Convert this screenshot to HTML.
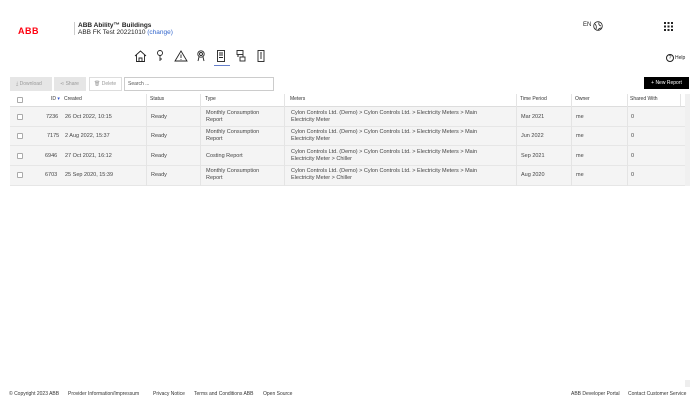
<!DOCTYPE html><html><head><style>
body{margin:0;width:700px;height:420px;background:#fff;font-family:"Liberation Sans",sans-serif;position:relative;overflow:hidden;color:#1f1f1f}
.a{position:absolute;white-space:nowrap}
.ic{position:absolute;top:49px}
.btn{position:absolute;top:77px;height:12px;font-size:5px;line-height:12px;color:#999;border:1px solid #ddd}
.h{position:absolute;top:96px;font-size:5px;color:#333}
.sep{position:absolute;top:94px;width:1px;height:92px;background:#e4e4e4}
.row{position:absolute;left:10px;width:675px;background:#f4f4f4;border-bottom:1px solid #e6e6e6}
.c{position:absolute;font-size:5.5px;line-height:6.5px;color:#444}
.cb{position:absolute;left:17px;width:4px;height:4px;border:1px solid #aaa;border-radius:1px;background:#fff}
.f{position:absolute;top:391px;font-size:5px;color:#333}
</style></head><body>
<div class="a" style="left:18px;top:26px;font-size:9px;font-weight:bold;color:#ff000f;letter-spacing:0.5px">ABB</div>
<div class="a" style="left:74px;top:22px;width:1px;height:13px;background:#ccc"></div>
<div class="a" style="left:78px;top:22px;font-size:6.5px;font-weight:bold">ABB Ability™ Buildings</div>
<div class="a" style="left:78px;top:29px;font-size:6.5px">ABB FK Test 20221010 <span style="color:#3366cc">(change)</span></div>
<div class="a" style="left:583px;top:22px;font-size:6px">EN</div>
<svg class="a" style="left:593px;top:21px" width="10" height="10" fill="none" stroke="#222" stroke-width="0.8"><circle cx="5" cy="5" r="4.3"/><path d="M2 3 Q4 5 3 8 M6 1.5 Q5 4 8 5 M5 9 Q6 7 8.5 7"/></svg>
<svg class="a" style="left:664px;top:22px" width="9" height="9"><g fill="#222"><rect x="0" y="0" width="2" height="2"/><rect x="3.5" y="0" width="2" height="2"/><rect x="7" y="0" width="2" height="2"/><rect x="0" y="3.5" width="2" height="2"/><rect x="3.5" y="3.5" width="2" height="2"/><rect x="7" y="3.5" width="2" height="2"/><rect x="0" y="7" width="2" height="2"/><rect x="3.5" y="7" width="2" height="2"/><rect x="7" y="7" width="2" height="2"/></g></svg>
<div class="a" style="left:666px;top:54px;width:6px;height:6px;border:1px solid #222;border-radius:50%;font-size:5px;line-height:6px;text-align:center">?</div>
<div class="a" style="left:675px;top:55px;font-size:5px">Help</div>
<svg class="ic" style="left:133px" width="140" height="20" fill="none" stroke="#222" stroke-width="0.9">
<path d="M2 7 L7.5 2 L13 7 M3.5 6 V12.5 H11.5 V6 M6 12.5 V9 H9 V12.5"/>
<circle cx="27" cy="4" r="2.5"/><path d="M27 6.5 V12 M27 10 H29"/>
<path d="M48 2 L54 12 H42 Z M48 5.5 V9 M48 10 V10.8"/>
<circle cx="68" cy="5" r="3.2"/><circle cx="68" cy="5" r="1.5"/><path d="M66 8 L65 12 M70 8 L71 12"/>
<rect x="84.5" y="1.5" width="7" height="11"/><path d="M86 4 H90 M86 6 H90 M86 8.5 H90"/>
<rect x="104" y="1.5" width="6" height="4"/><rect x="107" y="8" width="5" height="4"/><path d="M104 7 H106 M110 6 V8"/>
<rect x="125" y="1.5" width="6" height="11"/><path d="M127 4 H129 M128 5 V10"/>
</svg>
<div class="a" style="left:214px;top:65px;width:16px;height:1px;background:#6680cc"></div>
<div class="btn" style="left:10px;width:40px;background:#e6e6e6;border-color:#e6e6e6;text-indent:5px">⤓ Download</div>
<div class="btn" style="left:54px;width:30px;background:#e6e6e6;border-color:#e6e6e6;text-indent:5px">⋖ Share</div>
<div class="btn" style="left:89px;width:31px;text-indent:4px">🗑 Delete</div>
<div class="btn" style="left:124px;width:148px;color:#555;text-indent:3px;border-color:#ccc">Search ...</div>
<div class="a" style="left:644px;top:77px;width:45px;height:12px;background:#000;color:#fff;font-size:5px;line-height:12px;text-align:center">+ New Report</div>
<div class="cb" style="top:97px"></div>
<div class="h" style="left:51px">ID <span style="color:#3355cc">▾</span></div>
<div class="h" style="left:64px">Created</div><div class="h" style="left:150px">Status</div><div class="h" style="left:205px">Type</div><div class="h" style="left:290px">Meters</div><div class="h" style="left:520px">Time Period</div><div class="h" style="left:575px">Owner</div><div class="h" style="left:630px">Shared With</div>
<div class="a" style="left:10px;top:106px;width:675px;height:1px;background:#ddd"></div>
<div class="row" style="top:107px;height:19px"></div>
<div class="row" style="top:127px;height:18px"></div>
<div class="row" style="top:146px;height:19px"></div>
<div class="row" style="top:166px;height:19px"></div>
<div class="a" style="left:685px;top:94px;width:5px;height:92px;background:#f0f0f0"></div>
<div class="sep" style="left:146px"></div><div class="sep" style="left:200px"></div><div class="sep" style="left:284px"></div><div class="sep" style="left:516px"></div><div class="sep" style="left:571px"></div><div class="sep" style="left:627px"></div><div class="sep" style="left:680px;height:12px"></div>
<div class="cb" style="top:114px"></div><div class="c" style="left:46px;top:114px">7236</div><div class="c" style="left:65px;top:114px">26 Oct 2022, 10:15</div><div class="c" style="left:151px;top:114px">Ready</div><div class="c" style="left:206px;top:110px">Monthly Consumption<br>Report</div><div class="c" style="left:291px;top:110px">Cylon Controls Ltd. (Demo) &gt; Cylon Controls Ltd. &gt; Electricity Meters &gt; Main<br>Electricity Meter</div><div class="c" style="left:521px;top:114px">Mar 2021</div><div class="c" style="left:576px;top:114px">me</div><div class="c" style="left:631px;top:114px">0</div>
<div class="cb" style="top:133px"></div><div class="c" style="left:47px;top:133px">7175</div><div class="c" style="left:65px;top:133px">2 Aug 2022, 15:37</div><div class="c" style="left:151px;top:133px">Ready</div><div class="c" style="left:206px;top:129px">Monthly Consumption<br>Report</div><div class="c" style="left:291px;top:129px">Cylon Controls Ltd. (Demo) &gt; Cylon Controls Ltd. &gt; Electricity Meters &gt; Main<br>Electricity Meter</div><div class="c" style="left:521px;top:133px">Jun 2022</div><div class="c" style="left:576px;top:133px">me</div><div class="c" style="left:631px;top:133px">0</div>
<div class="cb" style="top:153px"></div><div class="c" style="left:45px;top:153px">6946</div><div class="c" style="left:65px;top:153px">27 Oct 2021, 16:12</div><div class="c" style="left:151px;top:153px">Ready</div><div class="c" style="left:206px;top:153px">Costing Report</div><div class="c" style="left:291px;top:149px">Cylon Controls Ltd. (Demo) &gt; Cylon Controls Ltd. &gt; Electricity Meters &gt; Main<br>Electricity Meter &gt; Chiller</div><div class="c" style="left:521px;top:153px">Sep 2021</div><div class="c" style="left:576px;top:153px">me</div><div class="c" style="left:631px;top:153px">0</div>
<div class="cb" style="top:172px"></div><div class="c" style="left:45px;top:172px">6703</div><div class="c" style="left:65px;top:172px">25 Sep 2020, 15:39</div><div class="c" style="left:151px;top:172px">Ready</div><div class="c" style="left:206px;top:168px">Monthly Consumption<br>Report</div><div class="c" style="left:291px;top:168px">Cylon Controls Ltd. (Demo) &gt; Cylon Controls Ltd. &gt; Electricity Meters &gt; Main<br>Electricity Meter &gt; Chiller</div><div class="c" style="left:521px;top:172px">Aug 2020</div><div class="c" style="left:576px;top:172px">me</div><div class="c" style="left:631px;top:172px">0</div>
<div class="a" style="left:685px;top:380px;width:5px;height:7px;background:#eee"></div>
<div class="f" style="left:9px">© Copyright 2023 ABB</div><div class="f" style="left:68px">Provider Information/Impressum</div><div class="f" style="left:153px">Privacy Notice</div><div class="f" style="left:194px">Terms and Conditions ABB</div><div class="f" style="left:263px">Open Source</div><div class="f" style="left:571px">ABB Developer Portal</div><div class="f" style="left:628px">Contact Customer Service</div>
</body></html>
